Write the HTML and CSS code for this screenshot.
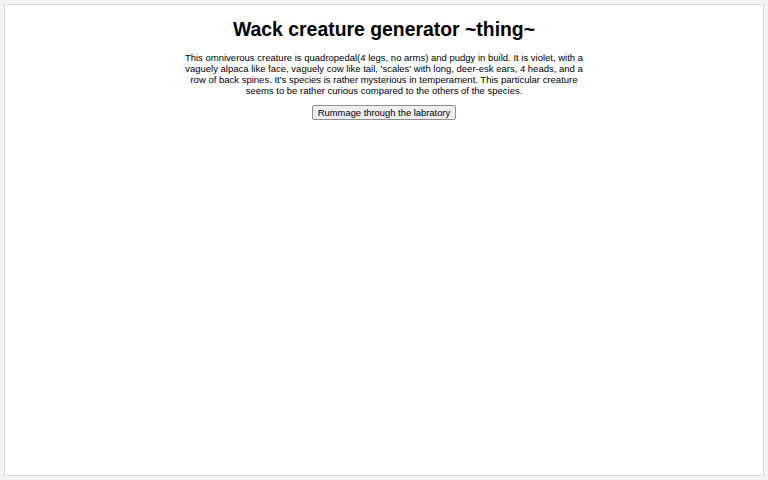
FILE: index.html
```html
<!DOCTYPE html>
<html>
<head>
<meta charset="utf-8">
<title>Wack creature generator ~thing~</title>
<link rel="stylesheet" href="styles.css">
</head>
<body>
<main class="panel">
  <h1 class="title">Wack creature generator ~thing~</h1>
  <p class="description">This omniverous creature is quadropedal(4 legs, no arms) and pudgy in build. It is violet, with a vaguely alpaca like face, vaguely cow like tail, 'scales' with long, deer-esk ears, 4 heads, and a row of back spines. It's species is rather mysterious in temperament. This particular creature seems to be rather curious compared to the others of the species.</p>
  <button class="rummage" type="button">Rummage through the labratory</button>
</main>
</body>
</html>
```
FILE: styles.css
```css
html, body {
  margin: 0;
  height: 100%;
}

body {
  background: #f3f3f3;
  padding: 4px;
  box-sizing: border-box;
  font-family: "Liberation Sans", Arial, sans-serif;
}

.panel {
  background: #fff;
  border: 1px solid #dcdcdc;
  height: 100%;
  box-sizing: border-box;
  display: flex;
  flex-direction: column;
  align-items: center;
}

.title {
  margin: 13px 0 0;
  font-size: 19.4px;
  line-height: 22px;
  font-weight: bold;
  color: #000;
}

.description {
  width: 406px;
  margin: 12px 0 0;
  font-size: 9.5px;
  line-height: 11px;
  text-align: center;
  color: #000;
}

.rummage {
  margin-top: 9px;
  height: 15px;
  padding: 0 5px;
  box-sizing: border-box;
  font-family: "Liberation Sans", Arial, sans-serif;
  font-size: 9.4px;
  line-height: 13px;
  color: #000;
  background: #efefef;
  border: 1px solid #8f8f8f;
  border-radius: 2px;
}
```
